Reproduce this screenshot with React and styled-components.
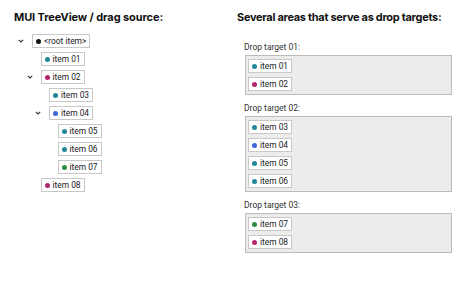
import React from "react";
import styled, { createGlobalStyle } from "styled-components";

const GlobalStyle = createGlobalStyle`
  body {
    margin: 0;
    background: #fff;
    font-family: Roboto, "Liberation Sans", sans-serif;
    color: #222;
  }
`;

const Page = styled.div`
  display: grid;
  grid-template-columns: 1fr 1fr;
  padding: 10px 14px;
`;

const Column = styled.div`
  display: flex;
  flex-direction: column;
`;

const Title = styled.h2`
  margin: 0 0 8px 0;
  font-family: Inter, "Liberation Sans", sans-serif;
  font-weight: 700;
  font-size: 11px;
  line-height: 14px;
  letter-spacing: ${(p) => (p.$tight ? "-0.3px" : "-0.1px")};
  color: #111;
  white-space: nowrap;
`;

const Tree = styled.ul`
  list-style: none;
  margin: 0;
  padding: 0;
`;

const Children = styled.ul`
  list-style: none;
  margin: 0;
  padding: 0 0 0 8.5px;
`;

const Row = styled.div`
  display: flex;
  align-items: center;
  height: 18px;
`;

const IconSlot = styled.span`
  width: 18px;
  flex: none;
  display: flex;
  align-items: center;
  padding-left: 4px;
  box-sizing: border-box;
`;

const Chip = styled.span`
  display: inline-flex;
  align-items: center;
  gap: 3px;
  height: 14px;
  padding: 0 3px;
  box-sizing: border-box;
  border: 1px solid #c8c8c8;
  background: #fff;
  font-size: 8.4px;
  color: #222;
  white-space: nowrap;
`;

const Dot = styled.span`
  width: 5px;
  height: 5px;
  border-radius: 50%;
  background: ${(p) => p.$color};
  flex: none;
`;

const Targets = styled.div`
  display: flex;
  flex-direction: column;
  gap: 7px;
  padding-top: 9px;
`;

const Group = styled.div`
  display: flex;
  flex-direction: column;
`;

const Label = styled.div`
  font-size: 8.5px;
  line-height: 12px;
  color: #333;
  margin: 0 0 2px 7px;
`;

const DropArea = styled.div`
  margin: 0 8px;
  padding: 1px 2px;
  background: #ececec;
  border: 1px solid #bcbcbc;
  display: flex;
  flex-direction: column;
  align-items: flex-start;
`;

const DropRow = styled.div`
  height: 18px;
  display: flex;
  align-items: center;
`;

const COLORS = {
  root: "#111",
  teal: "#1f8797",
  pink: "#b2246b",
  blue: "#3d66dc",
  green: "#2f8c45",
};

const Chevron = () => (
  <svg width="6" height="4" viewBox="0 0 6 4">
    <path d="M0.8 0.8 L3 3 L5.2 0.8" fill="none" stroke="#333" strokeWidth="1.1" />
  </svg>
);

const Item = ({ label, color, open, children }) => (
  <li>
    <Row>
      <IconSlot>{open ? <Chevron /> : null}</IconSlot>
      <Chip>
        <Dot $color={color} />
        {label}
      </Chip>
    </Row>
    {children ? <Children>{children}</Children> : null}
  </li>
);

const ITEMS = {
  "01": COLORS.teal,
  "02": COLORS.pink,
  "03": COLORS.teal,
  "04": COLORS.blue,
  "05": COLORS.teal,
  "06": COLORS.teal,
  "07": COLORS.green,
  "08": COLORS.pink,
};

const targets = [
  { name: "Drop target 01:", items: ["01", "02"] },
  { name: "Drop target 02:", items: ["03", "04", "05", "06"] },
  { name: "Drop target 03:", items: ["07", "08"] },
];

export default function App() {
  return (
    <>
      <GlobalStyle />
      <Page>
        <Column>
          <Title>MUI TreeView / drag source:</Title>
          <Tree>
            <Item label="<root item>" color={COLORS.root} open>
              <Item label="item 01" color={ITEMS["01"]} />
              <Item label="item 02" color={ITEMS["02"]} open>
                <Item label="item 03" color={ITEMS["03"]} />
                <Item label="item 04" color={ITEMS["04"]} open>
                  <Item label="item 05" color={ITEMS["05"]} />
                  <Item label="item 06" color={ITEMS["06"]} />
                  <Item label="item 07" color={ITEMS["07"]} />
                </Item>
              </Item>
              <Item label="item 08" color={ITEMS["08"]} />
            </Item>
          </Tree>
        </Column>
        <Column>
          <Title $tight>Several areas that serve as drop targets:</Title>
          <Targets>
            {targets.map((t) => (
              <Group key={t.name}>
                <Label>{t.name}</Label>
                <DropArea>
                  {t.items.map((id) => (
                    <DropRow key={id}>
                      <Chip>
                        <Dot $color={ITEMS[id]} />
                        item {id}
                      </Chip>
                    </DropRow>
                  ))}
                </DropArea>
              </Group>
            ))}
          </Targets>
        </Column>
      </Page>
    </>
  );
}
